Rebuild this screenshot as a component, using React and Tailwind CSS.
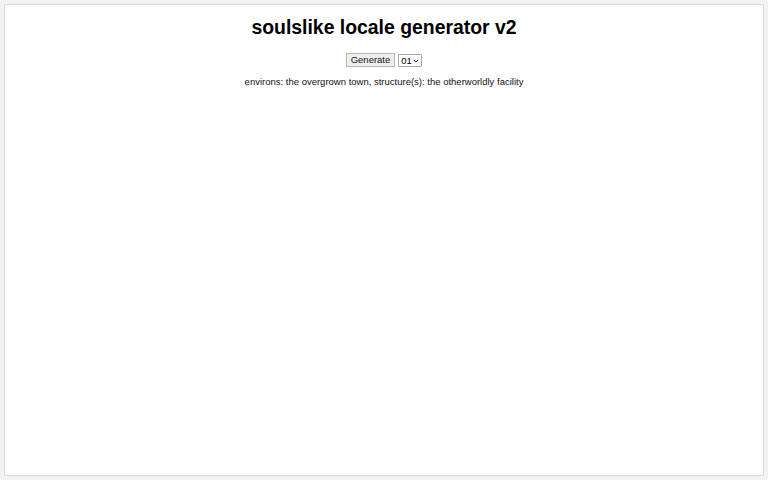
import { useState } from 'react'

const seeds = ['01', '02', '03', '04', '05']

export default function App() {
  const [seed, setSeed] = useState('01')
  const [result] = useState('environs: the overgrown town, structure(s): the otherworldly facility')

  return (
    <div className="h-[480px] w-full bg-[#f2f2f2] p-1 font-['Liberation_Sans',Arial,sans-serif] text-black">
      <div className="flex h-full flex-col items-center border border-[#dcdcdc] bg-white pt-[10px]">
        <h1 className="text-[19.4px] font-bold leading-[24px]">soulslike locale generator v2</h1>
        <div className="mt-[14px] flex h-[14px] items-center gap-[3px] leading-none">
          <button className="h-[14px] border border-[#b5b5b5] bg-[#efefef] px-[4px] text-[9.5px] leading-[12px] text-[#111]">
            Generate
          </button>
          <div className="relative flex">
            <select
              value={seed}
              onChange={(e) => setSeed(e.target.value)}
              className="h-[13px] w-[24px] appearance-none rounded-[1px] border border-[#a9a9a9] bg-white pl-[2px] text-[9.5px] leading-[11px]"
            >
              {seeds.map((s) => (
                <option key={s} value={s}>
                  {s}
                </option>
              ))}
            </select>
            <svg
              viewBox="0 0 8 5"
              className="pointer-events-none absolute right-[3px] top-[5px] h-[4px] w-[6px]"
              fill="none"
              stroke="#222"
              strokeWidth="1.3"
            >
              <path d="M1 1l3 3 3-3" />
            </svg>
          </div>
        </div>
        <p className="mt-[9px] text-[9.5px] leading-[12px] text-[#111]">{result}</p>
      </div>
    </div>
  )
}
